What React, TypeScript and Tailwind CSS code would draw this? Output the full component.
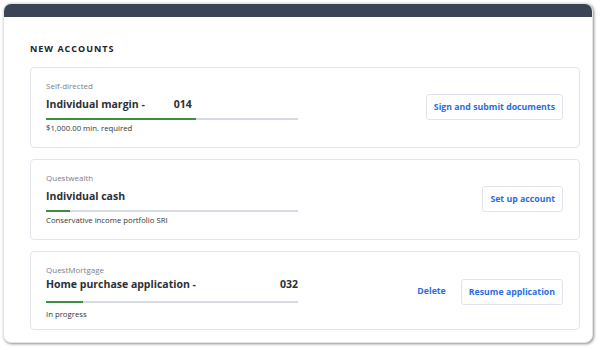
import React from "react";

type Acct = {
  label: string;
  title: string;
  num: string;
  numMl: string;
  pct: number;
  sub: string;
  actions: React.ReactNode;
  variant: "a" | "b";
};

function Btn({ children }: { children: React.ReactNode }) {
  return (
    <button className="h-[26px] px-[7px] rounded-[3px] border border-[#dfe3ec] bg-white text-[8.75px] font-bold text-[#2c6ddf] leading-none">
      {children}
    </button>
  );
}

function Card({ a }: { a: Acct }) {
  return (
    <div
      className={`flex items-center justify-between rounded-[4px] border border-[#e2e5ec] bg-white pl-[15px] pr-[16px] ${
        a.variant === "a" ? "pt-[12px] pb-[13px]" : "pt-[12px] pb-[9px]"
      }`}
    >
      <div className="w-[252px] flex flex-col">
        <div className="text-[8px] leading-[11px] text-[#7b8089]">{a.label}</div>
        <div
          className={`text-[10.5px] font-bold leading-[16px] text-[#2b2f36] flex ${
            a.variant === "a" ? "mt-[5px]" : "mt-[1px]"
          }`}
        >
          <span>{a.title}</span>
          {a.num && <span className={a.numMl}>{a.num}</span>}
        </div>
        <div
          className={`h-[2px] w-full bg-[#d6dae4] ${
            a.variant === "a" ? "mt-[6px]" : "mt-[9px]"
          }`}
        >
          <div className="h-full bg-[#3e8e41]" style={{ width: `${a.pct}%` }} />
        </div>
        <div
          className={`text-[7.75px] leading-[11px] text-[#33363b] ${
            a.variant === "a" ? "mt-[3px]" : "mt-[6px]"
          }`}
        >
          {a.sub}
        </div>
      </div>
      <div className="flex items-center gap-[15px]">{a.actions}</div>
    </div>
  );
}

export default function App() {
  const accts: Acct[] = [
    {
      label: "Self-directed",
      title: "Individual margin -",
      num: "014",
      numMl: "ml-[29px]",
      pct: 59.5,
      sub: "$1,000.00 min. required",
      actions: <Btn>Sign and submit documents</Btn>,
      variant: "a",
    },
    {
      label: "Questwealth",
      title: "Individual cash",
      num: "",
      numMl: "",
      pct: 9.5,
      sub: "Conservative income portfolio SRI",
      actions: <Btn>Set up account</Btn>,
      variant: "a",
    },
    {
      label: "QuestMortgage",
      title: "Home purchase application -",
      num: "032",
      numMl: "ml-auto",
      pct: 14.5,
      sub: "In progress",
      actions: (
        <>
          <span className="text-[8.75px] font-bold text-[#2c6ddf]">Delete</span>
          <Btn>Resume application</Btn>
        </>
      ),
      variant: "b",
    },
  ];
  return (
    <div
      className="w-[600px] h-[350px] bg-white pt-[3px] pl-[3px]"
      style={{ fontFamily: '"Open Sans", "Noto Sans", sans-serif' }}
    >
      <div className="w-[590px] h-[340px] rounded-[8px] bg-white border border-[#e4e4e4] shadow-[1px_1px_3px_rgba(0,0,0,0.45)] overflow-hidden flex flex-col">
        <div className="h-[13px] bg-[#3b4455] shrink-0" />
        <div className="pl-[26px] pr-[12px] pt-[26px]">
          <div className="text-[9px] font-bold tracking-[1px] text-[#1f2227] leading-[12px]">
            NEW ACCOUNTS
          </div>
          <div className="mt-[12px] flex flex-col gap-[11px]">
            {accts.map((a) => (
              <Card key={a.label} a={a} />
            ))}
          </div>
        </div>
      </div>
    </div>
  );
}
